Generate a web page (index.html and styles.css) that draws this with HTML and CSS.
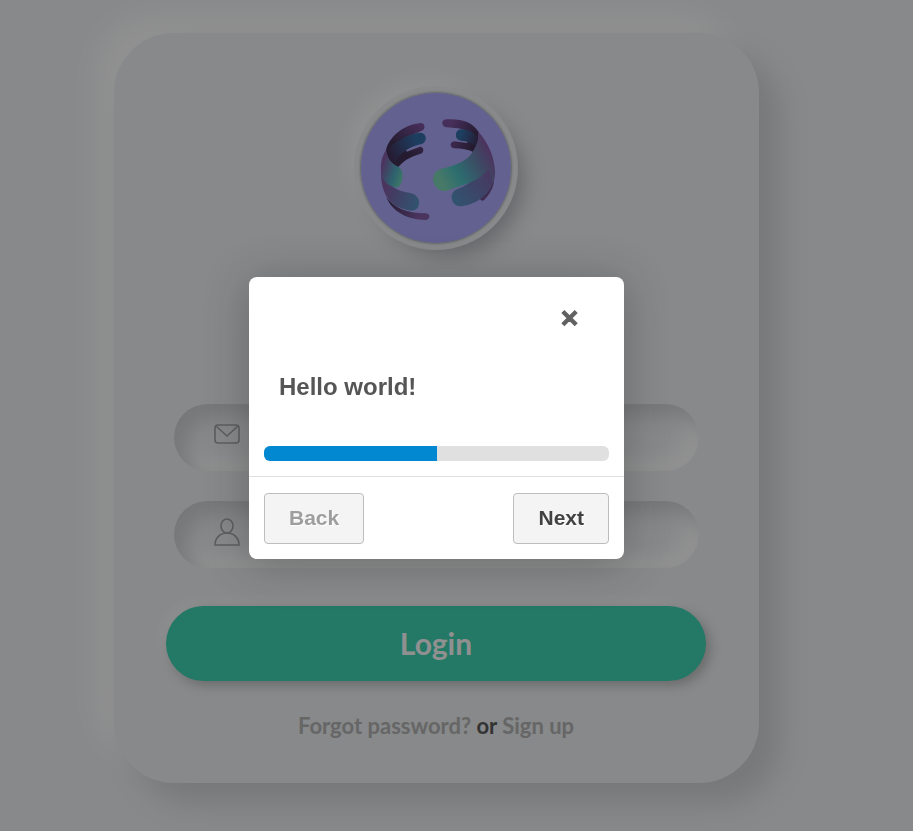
FILE: index.html
```html
<!DOCTYPE html>
<html lang="en">

<head>
  <meta charset="UTF-8">
  <meta name="viewport" content="width=device-width, initial-scale=1.0">
  <title>Login</title>
  <link rel="stylesheet" href="styles.css">
</head>

<body>
  <main class="login-card">
    <svg class="logo" viewBox="63 69 450 450" aria-hidden="true">
      <defs>
        <linearGradient id="inner" gradientUnits="userSpaceOnUse" x1="160" y1="270" x2="240" y2="160">
          <stop offset="0.3" stop-color="#27153f" />
          <stop offset="1" stop-color="#6d3c94" />
        </linearGradient>
        <linearGradient id="blue" gradientUnits="userSpaceOnUse" x1="150" y1="245" x2="250" y2="200">
          <stop offset="0" stop-color="#29194a" />
          <stop offset="0.8" stop-color="#1a5b9f" />
        </linearGradient>
        <linearGradient id="blueRight" gradientUnits="userSpaceOnUse" x1="350" y1="190" x2="414" y2="210">
          <stop offset="0.2" stop-color="#1a5b9f" />
          <stop offset="1" stop-color="#29194a" />
        </linearGradient>
        <linearGradient id="topRight" gradientUnits="userSpaceOnUse" x1="310" y1="160" x2="410" y2="200">
          <stop offset="0.2" stop-color="#6d3c94" />
          <stop offset="1" stop-color="#27153f" />
        </linearGradient>
        <linearGradient id="teal" gradientUnits="userSpaceOnUse" x1="122" y1="300" x2="190" y2="325">
          <stop offset="0" stop-color="#74489c" />
          <stop offset="0.6" stop-color="#3aa3bb" />
          <stop offset="1" stop-color="#5fd0ac" />
        </linearGradient>
        <linearGradient id="slate" gradientUnits="userSpaceOnUse" x1="135" y1="360" x2="237" y2="400">
          <stop offset="0" stop-color="#74489c" />
          <stop offset="1" stop-color="#3f86bd" />
        </linearGradient>
        <linearGradient id="tealRight" gradientUnits="userSpaceOnUse" x1="280" y1="345" x2="450" y2="250">
          <stop offset="0.15" stop-color="#6bd0ae" />
          <stop offset="0.42" stop-color="#36b9bd" />
          <stop offset="0.75" stop-color="#5577a6" />
          <stop offset="1" stop-color="#74489c" />
        </linearGradient>
        <linearGradient id="slateRight" gradientUnits="userSpaceOnUse" x1="340" y1="395" x2="465" y2="300">
          <stop offset="0" stop-color="#3f86bd" />
          <stop offset="1" stop-color="#74489c" />
        </linearGradient>
        <linearGradient id="tail" gradientUnits="userSpaceOnUse" x1="145" y1="390" x2="265" y2="440">
          <stop offset="0" stop-color="#27153f" />
          <stop offset="0.8" stop-color="#74489c" />
        </linearGradient>
      </defs>
      <rect x="63" y="69" width="450" height="450" fill="#a3a1fd" />

      <!-- left band -->
      <path fill="url(#inner)" d="M138 240C150 195 195 164 241 159C257 158 258 180 243 183L190 208L200 245L240 230C253 230 253 248 242 251C210 260 190 273 174 292C152 280 140 265 138 240Z" />
      <path fill="url(#blue)" d="M142 240C163 216 198 194 237 188C263 186 264 218 242 223C212 229 180 246 163 280Z" />
      <path fill="url(#tail)" d="M139 382C165 417 207 430 256 430C273 430 272 450 255 450C202 449 157 425 139 382Z" />
      <path fill="url(#slate)" d="M123 304C135 343 170 364 210 369C248 374 244 426 212 422C176 416 157 406 141 382C128 360 122 332 123 304Z" />
      <path fill="url(#teal)" d="M138 240C144 267 153 281 175 290C196 301 190 347 169 353C144 348 128 333 124 313C120 284 125 260 138 240Z" />

      <!-- right band -->
      <path fill="url(#topRight)" d="M318 148C365 145 397 156 416 186L416 216L400 246C384 238 364 236 342 235C328 234 329 215 342 214L382 219L380 183C366 176 345 173 319 172C303 170 303 149 318 148Z" />
      <path fill="url(#blueRight)" d="M362 178C384 178 405 187 414 207L407 230C395 217 380 213 361 212C342 209 344 179 362 178Z" />
      <path fill="#5b347d" d="M462 325C464 350 447 375 432 391C423 395 415 386 421 376Z" />
      <path fill="url(#slateRight)" d="M465 300C468 360 420 402 363 409C331 409 325 366 353 357C400 339 435 300 440 270Z" />
      <path fill="url(#tealRight)" d="M414 184C442 214 464 260 465 305C463 325 461 333 458 341C457 326 453 312 445 298C423 333 366 346 320 363C277 368 264 309 302 297C348 287 385 272 399 244C412 223 417 207 414 184Z" />
    </svg>

    <form class="fields">
      <div class="field">
        <svg class="icon" viewBox="0 0 28 28" aria-hidden="true">
          <rect x="2" y="4" width="24" height="18" rx="3" />
          <path d="M3 5l11 10L25 5" />
        </svg>
        <input type="email" aria-label="Email">
      </div>
      <div class="field">
        <svg class="icon" viewBox="0 0 28 28" aria-hidden="true">
          <ellipse cx="14" cy="8" rx="6" ry="7" />
          <path d="M2 27c0-7 5-12 12-12s12 5 12 12z" />
        </svg>
        <input type="password" aria-label="Password">
      </div>
      <button type="button" class="login-btn">Login</button>
    </form>

    <p class="links"><a href="#">Forgot password?</a> or <a href="#">Sign up</a></p>
  </main>

  <div class="overlay">
    <section class="tour" role="dialog" aria-labelledby="tourText">
      <header class="tour-header">
        <button type="button" class="close-btn" aria-label="Close">×</button>
      </header>
      <p class="tour-text" id="tourText">Hello world!</p>
      <div class="progress">
        <div class="progress-bar" style="width: 50%"></div>
      </div>
      <footer class="tour-buttons">
        <button type="button" class="back-btn">Back</button>
        <button type="button">Next</button>
      </footer>
    </section>
  </div>
</body>

</html>
```
FILE: styles.css
```css
* {
  box-sizing: border-box;
}

body {
  margin: 0;
  min-height: 100vh;
  padding: 33px 40px 48px 0;
  display: flex;
  justify-content: center;
  align-items: flex-start;
  background: #ecf0f3;
  font-family: Lato, sans-serif;
}

.login-card {
  width: 100%;
  max-width: 645px;
  min-height: 750px;
  padding: 60px 53px 38px 52px;
  border-radius: 60px;
  background: #ecf0f3;
  box-shadow: 20px 20px 30px #cbced1, -20px -20px 30px #fff;
}

.logo {
  display: block;
  width: 150px;
  height: 150px;
  margin: 0 auto;
  border-radius: 50%;
  box-shadow: 0 0 3px #5f5f5f, 0 0 0 7px #ecf0f3,
    12px 12px 22px #a7aaaf, -12px -12px 22px #fff;
}

.fields {
  margin-top: 161px;
}

.field {
  display: flex;
  align-items: center;
  height: 67px;
  margin: 0 7px 30px 8px;
  padding-left: 39px;
  border-radius: 38px;
  box-shadow: inset 12px 12px 18px #cbced1, inset -12px -12px 18px #fff;
}

.field input {
  flex: 1;
  min-width: 0;
  padding: 15px 12px;
  border: none;
  outline: none;
  background: none;
  font: 27px Lato, sans-serif;
  color: #555;
}

.icon {
  width: 28px;
  height: 28px;
  margin-bottom: 5px;
  fill: none;
  stroke: #999;
  stroke-width: 1.6;
}

.login-btn {
  display: block;
  width: 100%;
  height: 75px;
  margin-top: 38px;
  padding: 0 0 2px;
  border: none;
  border-radius: 38px;
  background: #24cfaa;
  color: #fff;
  font: 700 30px Lato, sans-serif;
  cursor: pointer;
  box-shadow: 4px 4px 12px #b1b1b1, -4px -4px 12px #fff;
}

.links {
  margin: 32px 0 0;
  text-align: center;
  font-size: 22px;
  line-height: 26px;
  font-weight: 700;
  color: #444;
}

.links a {
  color: #aaa;
  text-decoration: none;
}

/* tour dialog */
.overlay {
  position: fixed;
  inset: 0;
  display: flex;
  justify-content: center;
  align-items: center;
  padding: 5px 40px 0 0;
  background: rgba(33, 33, 33, 0.5);
}

.tour {
  width: 375px;
  border-radius: 8px;
  background: #fff;
  box-shadow: 0 4px 45px rgba(33, 33, 33, 0.3);
  font-family: "Liberation Sans", Arial, sans-serif;
  font-weight: 700;
}

.tour-header {
  display: flex;
  justify-content: flex-end;
  padding: 18px 32px 0;
}

.close-btn {
  width: 45px;
  height: 45px;
  padding: 0;
  border: none;
  background: none;
  color: #616161;
  font: 700 30px "Liberation Sans", Arial, sans-serif;
  -webkit-text-stroke: 1px #616161;
  cursor: pointer;
}

.tour-text {
  margin: 0;
  padding: 31px 30px 29px;
  font-size: 24px;
  line-height: 32px;
  color: #555;
}

.progress {
  height: 15px;
  margin: 14px 15px 15px;
  border-radius: 6px;
  overflow: hidden;
  background: #e0e0e0;
}

.progress-bar {
  height: 100%;
  background: #0288d1;
}

.tour-buttons {
  display: flex;
  justify-content: space-between;
  padding: 16px 15px 15px;
  border-top: 1px solid #e0e0e0;
}

.tour-buttons button {
  height: 51px;
  padding: 0 24px 2px;
  border: 1px solid #bdbdbd;
  border-radius: 4px;
  background: #f4f4f4;
  color: #424242;
  font: 700 21px "Liberation Sans", Arial, sans-serif;
  text-shadow: 1px 1px 0 #fff;
  cursor: pointer;
}

.tour-buttons .back-btn {
  color: #9e9e9e;
}
```
